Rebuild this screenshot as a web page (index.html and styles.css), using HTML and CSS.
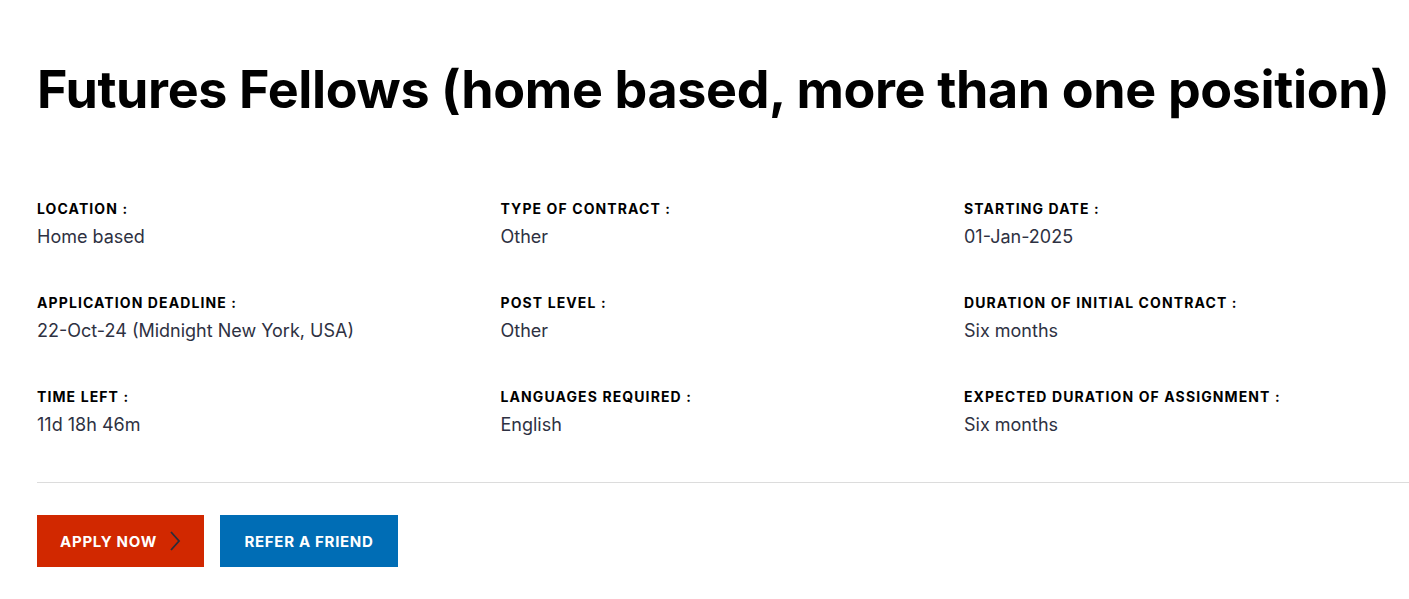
FILE: index.html
```html
<!DOCTYPE html>
<html>
<head>
<meta charset="utf-8">
<link rel="stylesheet" href="styles.css">
</head>
<body>
<main class="page">
  <h1 class="title">Futures Fellows (home based, more than one position)</h1>
  <div class="facts">
    <div class="fact"><div class="label">LOCATION :</div><div class="value">Home based</div></div>
    <div class="fact"><div class="label">TYPE OF CONTRACT :</div><div class="value">Other</div></div>
    <div class="fact"><div class="label">STARTING DATE :</div><div class="value">01-Jan-2025</div></div>
    <div class="fact"><div class="label">APPLICATION DEADLINE :</div><div class="value">22-Oct-24 (Midnight New York, USA)</div></div>
    <div class="fact"><div class="label">POST LEVEL :</div><div class="value">Other</div></div>
    <div class="fact"><div class="label">DURATION OF INITIAL CONTRACT :</div><div class="value">Six months</div></div>
    <div class="fact"><div class="label">TIME LEFT :</div><div class="value">11d 18h 46m</div></div>
    <div class="fact"><div class="label">LANGUAGES REQUIRED :</div><div class="value">English</div></div>
    <div class="fact"><div class="label">EXPECTED DURATION OF ASSIGNMENT :</div><div class="value">Six months</div></div>
  </div>
  <hr class="divider">
  <div class="actions">
    <a class="btn btn-apply" href="#">APPLY NOW
      <svg class="chev" width="12" height="22" viewBox="0 0 12 22"><path d="M2 2 L10 11 L2 20" fill="none" stroke="#2a2d3a" stroke-width="1.8"/></svg>
    </a>
    <a class="btn btn-refer" href="#">REFER A FRIEND</a>
  </div>
</main>
</body>
</html>
```
FILE: styles.css
```css
html, body { margin: 0; padding: 0; background: #fff; overflow: hidden; }
body { font-family: "Inter", "Liberation Sans", sans-serif; color: #000; }
.page { padding: 58px 0 0 37px; width: 1390px; }
.title { margin: 0; font-size: 52px; font-weight: 700; line-height: 64px; letter-spacing: -0.36px; }
.facts { display: grid; grid-template-columns: repeat(3, 463.5px); row-gap: 45px; margin-top: 78px; }
.fact { display: flex; flex-direction: column; gap: 7px; }
.label { font-size: 14px; font-weight: 700; line-height: 18px; letter-spacing: 1.1px; }
.value { font-size: 18px; line-height: 24px; color: #2e3142; font-weight: 400; }
.divider { border: 0; border-top: 1px solid #dcdcdc; margin: 45px 0 0 0; }
.actions { display: flex; gap: 16px; margin-top: 32px; }
.btn { display: flex; align-items: center; justify-content: center; height: 52px; color: #fff; text-decoration: none; font-size: 15px; font-weight: 700; letter-spacing: 0.7px; }
.btn-apply { background: #d12800; width: 167px; gap: 12px; }
.btn-refer { background: #006db5; width: 178px; }
.chev { display: block; }
```
